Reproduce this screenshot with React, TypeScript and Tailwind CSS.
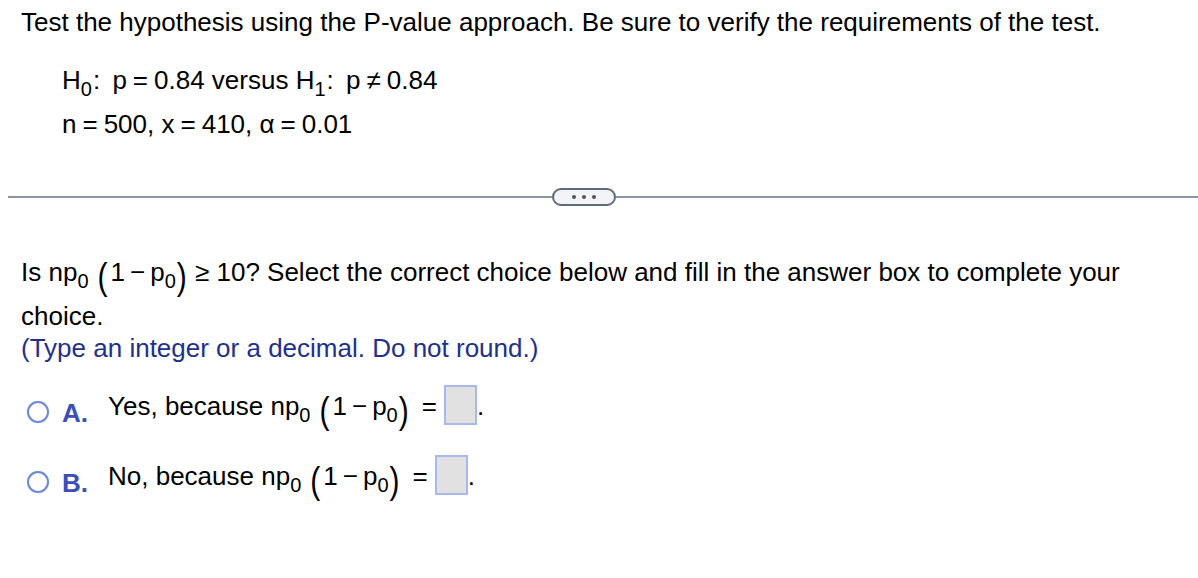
import React from 'react';

const font = { fontFamily: '"Liberation Sans", Arial, Helvetica, sans-serif' };

function Sub({ children }: { children: React.ReactNode }) {
  return <span className="relative top-[7px] text-[20px] leading-none">{children}</span>;
}

// tall thin bracket, like the math renderer draws it
function Paren({ children }: { children: React.ReactNode }) {
  return (
    <span className="relative top-[6px] inline-block text-[30px] leading-none scale-y-[1.22] mx-[1px]">
      {children}
    </span>
  );
}

function Op({ children }: { children: React.ReactNode }) {
  return <span className="mx-[6px]">{children}</span>;
}

function Expr() {
  return (
    <span>
      np<Sub>0</Sub>
      <span className="ml-[8px]" />
      <Paren>(</Paren>
      <span className="ml-[2px]">1</span>
      <span className="mx-[5px]">−</span>p<Sub>0</Sub>
      <Paren>)</Paren>
    </span>
  );
}

function AnswerBox() {
  return (
    <span className="inline-block w-[33px] h-[40px] align-[-10px] bg-[#e1e1e1] border-2 border-[#a7b9ea]" />
  );
}

function Choice({ letter, text }: { letter: string; text: string }) {
  return (
    <div className="flex items-start h-[40px]">
      <div className="mt-[16px] ml-[6px] w-[22px] h-[22px] rounded-full border-[2.5px] border-[#6f88d6] shadow-[0_0_1px_#9fb2ea]" />
      <span className="ml-[13px] mt-[15px] leading-[26px] font-bold text-[#3a4fb8]">{letter}.</span>
      <span className="ml-[20px] leading-[26px]">
        {text} <Expr />
        <span className="ml-[12px] mr-[7px]">=</span>
        <AnswerBox />.
      </span>
    </div>
  );
}

export default function App() {
  return (
    <div className="w-[1198px] h-[578px] bg-white text-black text-[26px] overflow-hidden" style={font}>
      <div className="pl-[21px] pt-[7px]">
        <p className="leading-[30px]">
          Test the hypothesis using the P-value approach. Be sure to verify the requirements of the test.
        </p>
        <div className="ml-[41px]">
          <p className="mt-[28px] leading-[30px]">
            H<Sub>0</Sub>
            <span className="ml-[1px]">:</span> <span className="ml-[5px]">p</span>
            <Op>=</Op>0.84 versus H<Sub>1</Sub>
            <span className="ml-[1px]">:</span> <span className="ml-[5px]">p</span>
            <Op>≠</Op>0.84
          </p>
          <p className="mt-[14px] leading-[30px]">
            n<Op>=</Op>500, x<Op>=</Op>410, α<Op>=</Op>0.01
          </p>
        </div>
      </div>

      <div className="mt-[49px] ml-[8px] flex items-center h-[18px]">
        <div className="w-[544px] h-[2px] bg-[#8e95a2]" />
        <button className="w-[64px] h-[18px] rounded-full border-2 border-[#5f6b7b] bg-[#f3f4f6] flex items-center justify-center gap-[6px]">
          <span className="w-[4px] h-[4px] rounded-full bg-[#4b5563]" />
          <span className="w-[4px] h-[4px] rounded-full bg-[#4b5563]" />
          <span className="w-[4px] h-[4px] rounded-full bg-[#4b5563]" />
        </button>
        <div className="flex-1 h-[2px] bg-[#8e95a2]" />
      </div>

      <div className="px-[21px]">
        <p className="mt-[44px] leading-[44px]">
          Is <Expr /> ≥ 10? Select the correct choice below and fill in the answer box to complete your choice.
        </p>
        <p className="leading-[20px] text-[#22308c]">(Type an integer or a decimal. Do not round.)</p>
        <div className="mt-[27px] flex flex-col gap-[30px]">
          <Choice letter="A" text="Yes, because" />
          <Choice letter="B" text="No, because" />
        </div>
      </div>
    </div>
  );
}
